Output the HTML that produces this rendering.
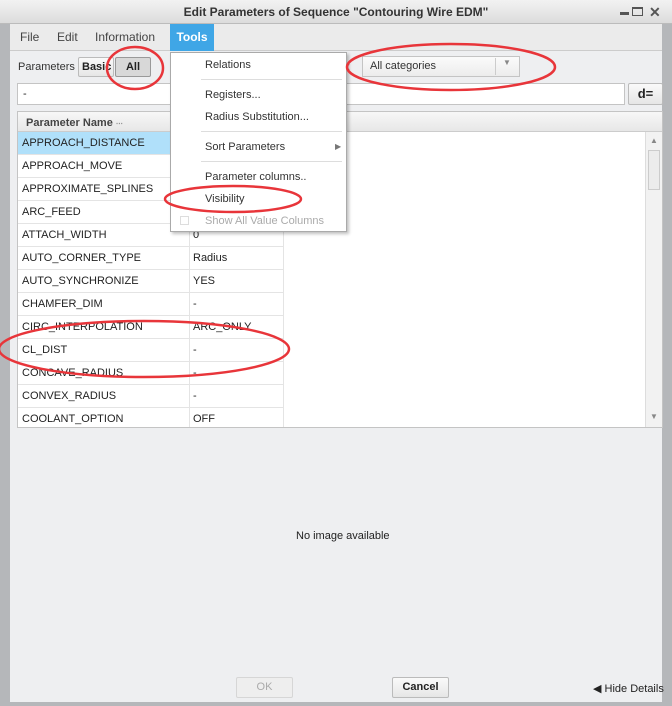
<!DOCTYPE html>
<html><head><style>
*{margin:0;padding:0;box-sizing:border-box}
body{width:672px;height:706px;position:relative;overflow:hidden;font-family:"Liberation Sans",Arial,sans-serif;font-size:11px;color:#222;background:#b5b7ba}
.abs{position:absolute}
#win{left:10px;top:24px;width:652px;height:678px;background:#eeeff1}
#title{left:0;top:0;width:672px;height:24px;background:linear-gradient(#f2f2f2,#dcdcdc);border-bottom:1px solid #bbb;text-align:center;font-weight:bold;font-size:12px;line-height:24px;color:#333}
#menubar{left:10px;top:24px;width:652px;height:27px;background:#ebebeb;border-bottom:1px solid #ccc}
.mi{position:absolute;top:0;height:27px;line-height:27px;font-size:12px;color:#444}
.row{position:absolute;left:18px;width:266px;height:23px;border-bottom:1px solid #e4e4e4;background:#fff}
.row span{position:absolute;top:5px}
.c1{left:4px}.c2{left:175px}
.pm{position:absolute;left:34px;font-size:11px;color:#333}
.sep{position:absolute;left:30px;right:4px;height:1px;background:#ddd}
.btn{position:absolute;border:1px solid #bbb;border-radius:2px;background:linear-gradient(#fafafa,#e6e6e6);text-align:center;font-weight:bold;font-size:11px}
</style></head><body>
<div id="title" class="abs">Edit Parameters of Sequence "Contouring Wire EDM"
<span class="abs" style="left:620px;top:12px;width:9px;height:3px;background:#555"></span>
<span class="abs" style="left:632px;top:7px;width:11px;height:9px;border:1px solid #555;border-top-width:2px"></span>
<span class="abs" style="left:649px;top:0;font-size:14px;color:#555">✕</span>
</div>
<div id="win" class="abs"></div>
<div id="menubar" class="abs">
<span class="mi" style="left:10px">File</span>
<span class="mi" style="left:47px">Edit</span>
<span class="mi" style="left:85px">Information</span>
<span class="mi" style="left:160px;width:44px;background:#3fa6e6;color:#fff;font-weight:bold;text-align:center">Tools</span>
</div>
<span class="abs" style="left:18px;top:61px;color:#333">Parameters</span>
<div class="btn" style="left:78px;top:57px;width:36px;height:20px;line-height:18px;text-align:left;padding-left:3px;overflow:hidden">Basic</div>
<div class="btn" style="left:115px;top:57px;width:36px;height:20px;line-height:18px;background:#d8d8d8;border-color:#999">All</div>
<span class="abs" style="left:338px;top:61px;color:#333">ry:</span>
<div class="abs" style="left:362px;top:56px;width:158px;height:21px;background:linear-gradient(#fbfbfb,#ececec);border:1px solid #c4c4c4;padding:3px 7px;font-size:11px;color:#333">All categories<span class="abs" style="left:132px;top:1px;width:1px;height:17px;background:#ccc"></span><span class="abs" style="left:140px;top:1px;color:#888;font-size:8px">▼</span></div>
<div class="abs" style="left:17px;top:83px;width:608px;height:22px;background:#fff;border:1px solid #c4c4c4;padding:4px 5px">-</div>
<div class="btn" style="left:628px;top:83px;width:35px;height:22px;line-height:20px;font-size:13px">d=</div>
<div class="abs" style="left:17px;top:111px;width:646px;height:317px;background:#fff;border:1px solid #c4c4c4"></div>
<div class="abs" style="left:18px;top:112px;width:644px;height:20px;background:linear-gradient(#f7f7f7,#e7e7e7);border-bottom:1px solid #ccc;font-weight:bold;color:#444;padding:5px 8px">Parameter Name <span style="font-size:7px;color:#888">⋯</span></div>
<div class="abs" style="left:645px;top:132px;width:17px;height:295px;background:#f2f2f2;border-left:1px solid #ddd">
<div class="abs" style="left:2px;top:18px;width:12px;height:40px;border:1px solid #ccc;background:#ececec"></div>
<span class="abs" style="left:4px;top:4px;font-size:8px;color:#888">▲</span>
<span class="abs" style="left:4px;top:280px;font-size:8px;color:#888">▼</span>
</div>
<div class="row" style="top:132px;width:172px;background:#b0e0fa"><span class="c1">APPROACH_DISTANCE</span></div>
<div class="row" style="top:155px"><span class="c1">APPROACH_MOVE</span></div>
<div class="row" style="top:178px"><span class="c1">APPROXIMATE_SPLINES</span></div>
<div class="row" style="top:201px"><span class="c1">ARC_FEED</span></div>
<div class="row" style="top:224px"><span class="c1">ATTACH_WIDTH</span><span class="c2">0</span></div>
<div class="row" style="top:247px"><span class="c1">AUTO_CORNER_TYPE</span><span class="c2">Radius</span></div>
<div class="row" style="top:270px"><span class="c1">AUTO_SYNCHRONIZE</span><span class="c2">YES</span></div>
<div class="row" style="top:293px"><span class="c1">CHAMFER_DIM</span><span class="c2">-</span></div>
<div class="row" style="top:316px"><span class="c1">CIRC_INTERPOLATION</span><span class="c2">ARC_ONLY</span></div>
<div class="row" style="top:339px"><span class="c1">CL_DIST</span><span class="c2">-</span></div>
<div class="row" style="top:362px"><span class="c1">CONCAVE_RADIUS</span><span class="c2">-</span></div>
<div class="row" style="top:385px"><span class="c1">CONVEX_RADIUS</span><span class="c2">-</span></div>
<div class="row" style="top:408px;height:19px;border:0"><span class="c1">COOLANT_OPTION</span><span class="c2">OFF</span></div>
<div class="abs" style="left:189px;top:132px;width:1px;height:295px;background:#e4e4e4"></div>
<div class="abs" style="left:283px;top:132px;width:1px;height:295px;background:#e4e4e4"></div>
<span class="abs" style="left:296px;top:530px">No image available</span>
<div class="btn" style="left:236px;top:677px;width:57px;height:21px;line-height:19px;color:#aaa;font-weight:normal;background:#eee;border-color:#d6d6d6">OK</div>
<div class="btn" style="left:392px;top:677px;width:57px;height:21px;line-height:19px">Cancel</div>
<span class="abs" style="left:593px;top:682px;color:#222">◀ Hide Details</span>
<div class="abs" style="left:170px;top:52px;width:177px;height:180px;background:#fff;border:1px solid #aaa;box-shadow:2px 2px 3px rgba(0,0,0,.25)">
<span class="pm" style="top:6px">Relations</span>
<div class="sep" style="top:26px"></div>
<span class="pm" style="top:36px">Registers...</span>
<span class="pm" style="top:58px">Radius Substitution...</span>
<div class="sep" style="top:78px"></div>
<span class="pm" style="top:88px">Sort Parameters</span><span class="abs" style="left:164px;top:89px;font-size:8px;color:#777">▶</span>
<div class="sep" style="top:108px"></div>
<span class="pm" style="top:118px">Parameter columns..</span>
<span class="pm" style="top:140px">Visibility</span>
<span class="abs" style="left:9px;top:163px;width:9px;height:9px;border:1px solid #ddd"></span>
<span class="pm" style="top:162px;color:#aaa">Show All Value Columns</span>
</div>
<svg class="abs" style="left:0;top:0" width="672" height="706">
<g fill="none" stroke="#e8353a" stroke-width="2.5">
<ellipse cx="135" cy="68" rx="28" ry="21"/>
<ellipse cx="451" cy="67" rx="104" ry="23"/>
<ellipse cx="233" cy="199" rx="68" ry="13"/>
<ellipse cx="144" cy="349" rx="145" ry="28"/>
</g></svg>
</body></html>
